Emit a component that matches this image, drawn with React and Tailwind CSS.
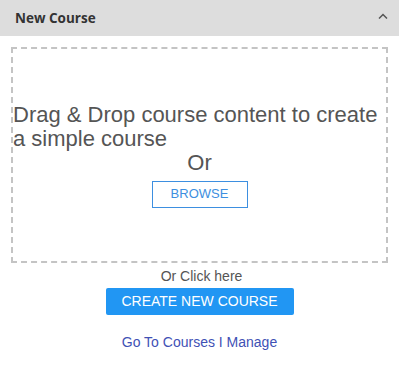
import React from "react";

const ChevronUp = () => (
  <svg width="10" height="6" viewBox="0 0 10 6" fill="none" stroke="#555" strokeWidth="1.5">
    <path d="M1 5.5 L5 1.5 L9 5.5" />
  </svg>
);

const App = () => {
  return (
    <div className="w-[399px] h-[371px] bg-white" style={{ fontFamily: '"Liberation Sans", Arial, sans-serif' }}>
      {/* header */}
      <div className="flex items-center justify-between h-9 pl-[15px] pr-[11px] bg-[#dddddd]">
        <span className="text-[13.5px] font-bold text-[#333]" style={{ fontFamily: '"Open Sans", sans-serif' }}>
          New Course
        </span>
        <span className="-mt-[4px]">
          <ChevronUp />
        </span>
      </div>

      <div className="px-[11px] pt-[11px]">
        {/* drop zone */}
        <div className="h-[216px] border-2 border-dashed border-[#c4c4c4] flex flex-col justify-center">
          <p className="text-[22px] leading-[24px] text-[#555]">
            Drag &amp; Drop course content to create a simple course
          </p>
          <p className="text-[22px] leading-[24px] text-[#555] text-center">Or</p>
          <div className="flex justify-center mt-[6px]">
            <button className="w-[96px] h-[27px] border border-[#3d8fe0] text-[13px] text-[#3d8fe0] bg-white">
              BROWSE
            </button>
          </div>
        </div>

        <div className="flex flex-col items-center">
          <p className="text-[14px] leading-[16px] text-[#555] mt-[5px] ml-[4px]">Or Click here</p>
          <button className="mt-[4px] w-[188px] h-[27px] rounded-[2px] bg-[#2196f3] text-white text-[14px]">
            CREATE NEW COURSE
          </button>
          <a href="#" className="mt-[19px] text-[14px] leading-[16px] text-[#3f51b5]">
            Go To Courses I Manage
          </a>
        </div>
      </div>
    </div>
  );
};

export default App;
